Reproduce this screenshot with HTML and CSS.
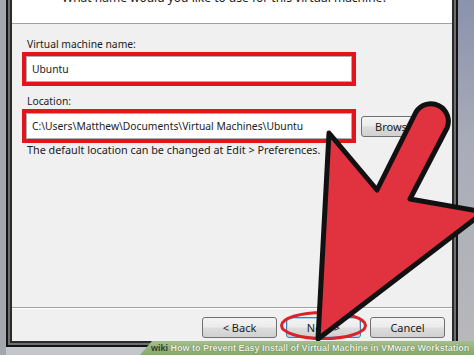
FILE: index.html
```html
<!DOCTYPE html>
<html lang="en">
<head>
    <meta charset="UTF-8">
    <meta name="viewport" content="width=device-width, initial-scale=1.0">
    <title>New Virtual Machine Wizard</title>
    <link rel="stylesheet" href="styles.css">
</head>
<body>
    <div class="desk">
        <div class="edge-left"></div>
        <div class="frame">
            <div class="panel">
                <!-- Wizard header -->
                <div class="head">
                    <p class="question">What name would you like to use for this virtual machine?</p>
                </div>

                <!-- Fields -->
                <div class="content">
                    <label class="label">Virtual machine name:</label>
                    <div class="mark">
                        <div class="field">Ubuntu</div>
                    </div>

                    <label class="label loc">Location:</label>
                    <div class="row">
                        <div class="mark">
                            <div class="field">C:\Users\Matthew\Documents\Virtual Machines\Ubuntu</div>
                        </div>
                        <button class="btn browse">Browse...</button>
                    </div>
                    <p class="hint">The default location can be changed at Edit &gt; Preferences.</p>
                </div>

                <!-- Buttons -->
                <div class="actions">
                    <button class="btn">&lt; Back</button>
                    <button class="btn default">Next &gt;</button>
                    <button class="btn">Cancel</button>
                </div>
            </div>
        </div>
        <div class="edge-right"></div>
    </div>

    <svg class="callout" width="474" height="355" viewBox="0 0 474 355">
        <ellipse cx="323.5" cy="325.5" rx="42" ry="13" fill="none" stroke="#d92229" stroke-width="3"/>
        <path d="M318 339 L329 133 L377 190 L416 112 A17.5 17.5 0 0 1 447 128 L410 199 L484 212 Z"
              fill="#e0323f" stroke="#111" stroke-width="5" stroke-linejoin="round"/>
    </svg>

    <div class="banner"><b>wiki</b> How to Prevent Easy Install of Virtual Machine in VMware Workstation</div>
</body>
</html>
```

FILE: styles.css
```css
* {
    box-sizing: border-box;
}
html, body {
    margin: 0;
}
body {
    position: relative;
    width: 474px;
    height: 355px;
    overflow: hidden;
    background-color: #c4c6ca;
    font-family: "Noto Sans", "Open Sans", sans-serif;
    color: #1b1b1b;
}
.desk {
    display: flex;
    height: 355px;
}
.edge-left {
    width: 6px;
    background-color: #a3a7ae;
}
.edge-right {
    flex: 1;
    background: linear-gradient(#8a92ad, #a9acb8 40%, #b9b9bb);
}
.frame {
    width: 452px;
    height: 347px;
    padding: 0 2px 2px;
    border: 2px solid #141414;
    border-top: 0;
    background-color: #6f6f6f;
}
.panel {
    display: flex;
    flex-direction: column;
    height: 100%;
    border: 2px solid #2b2b2b;
    border-top: 0;
    background-color: #f0f0f0;
}
.head {
    height: 24px;
    padding-left: 50px;
    overflow: hidden;
    background-color: #fff;
    border-bottom: 1px solid #a0a0a0;
}
.question {
    margin: -9px 0 0;
    font-size: 12px;
    line-height: 14px;
}
.content {
    flex: 1;
    padding: 12px 0 0 10px;
    font-size: 10.3px;
}
.label {
    display: block;
    margin-left: 5px;
    line-height: 16px;
}
.loc {
    margin-top: 7px;
}
.mark {
    width: 334px;
    height: 34px;
    border: 4px solid #e3141c;
}
.field {
    height: 26px;
    padding-left: 5px;
    line-height: 24px;
    white-space: nowrap;
    background-color: #fff;
    border: 1px solid #abadb3;
}
.row {
    display: flex;
    align-items: center;
    gap: 5px;
}
.hint {
    margin: 0 0 0 5px;
    font-size: 10.8px;
    line-height: 14px;
}
.btn {
    width: 75px;
    height: 21px;
    padding: 0;
    font-family: "Noto Sans", "Open Sans", sans-serif;
    font-size: 11px;
    color: #1b1b1b;
    border: 1px solid #707070;
    border-radius: 3px;
    background: linear-gradient(#f4f4f4, #ebebeb 48%, #dddddd 52%, #d0d0d0);
}
.default {
    border-color: #3c7fb1;
    box-shadow: inset 0 0 0 1px #a6d8f5;
}
.actions {
    display: flex;
    justify-content: flex-end;
    align-items: flex-start;
    gap: 9px;
    height: 34px;
    padding: 9px 7px 0 0;
    border-top: 1px solid #a0a0a0;
    box-shadow: inset 0 1px #fff;
}
.callout {
    position: absolute;
    left: 0;
    top: 0;
}
.banner {
    position: absolute;
    left: 140px;
    right: 0;
    bottom: 0;
    height: 14px;
    padding-left: 11px;
    font: bold 9px/14px "Liberation Sans", sans-serif;
    color: #eef2e8;
    white-space: nowrap;
    text-shadow: 0 0 1px rgba(50, 70, 30, 0.9);
    background: linear-gradient(#a4be8d, #86a86a);
    clip-path: polygon(12px 0, 100% 0, 100% 100%, 0 100%);
}
.banner b {
    color: #34402a;
    text-shadow: none;
}
```
